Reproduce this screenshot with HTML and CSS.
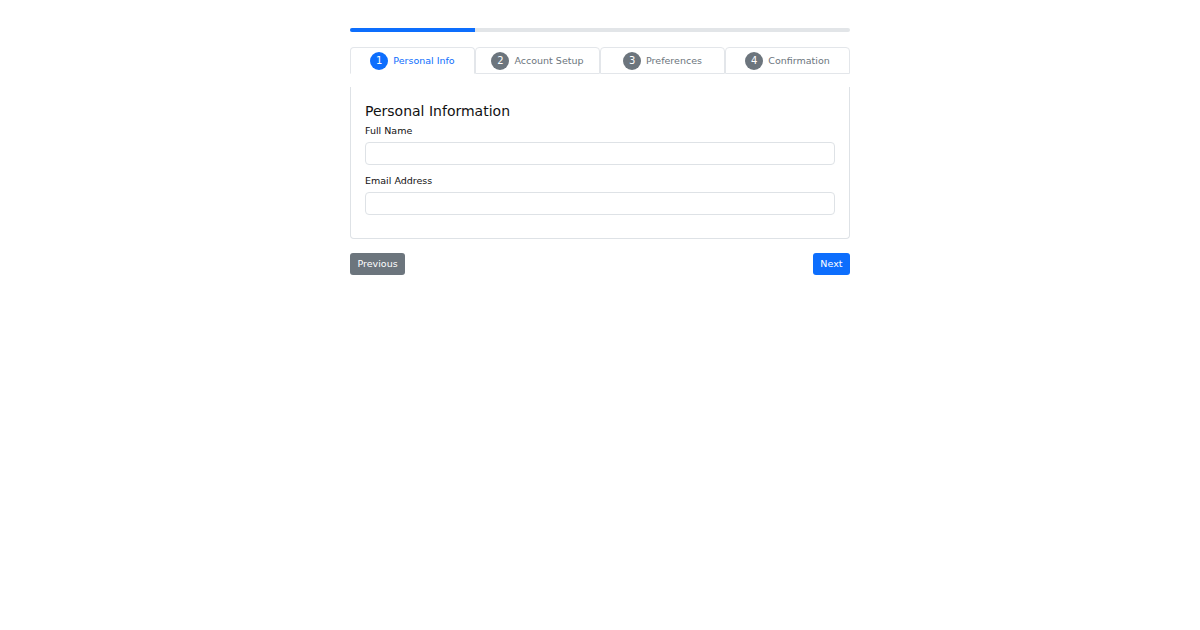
FILE: index.html
```html
<!DOCTYPE html>
<html lang="en">
<head>
<meta charset="utf-8">
<title>Wizard</title>
<link rel="stylesheet" href="styles.css">
</head>
<body>
<div class="wizard">
  <div class="progress"><div class="progress-fill" style="width:25%"></div></div>
  <div class="tabs">
    <div class="tab active"><span class="num">1</span><span class="label">Personal Info</span></div>
    <div class="tab"><span class="num">2</span><span class="label">Account Setup</span></div>
    <div class="tab"><span class="num">3</span><span class="label">Preferences</span></div>
    <div class="tab"><span class="num">4</span><span class="label">Confirmation</span></div>
  </div>
  <div class="card">
    <h2 class="title">Personal Information</h2>
    <div class="field">
      <label class="field-label">Full Name</label>
      <input class="input" type="text">
    </div>
    <div class="field">
      <label class="field-label">Email Address</label>
      <input class="input" type="email">
    </div>
  </div>
  <div class="actions">
    <button class="btn btn-secondary">Previous</button>
    <button class="btn btn-primary">Next</button>
  </div>
</div>
</body>
</html>
```
FILE: styles.css
```css
* { box-sizing: border-box; }
body {
  margin: 0;
  background: #fff;
  font-family: "DejaVu Sans", sans-serif;
  color: #212529;
}
.wizard {
  width: 500px;
  margin: 0 auto;
  padding-top: 28px;
}
.progress {
  height: 4px;
  background: #e2e5e8;
  border-radius: 2px;
  overflow: hidden;
}
.progress-fill {
  height: 100%;
  background: #0d6efd;
}
.tabs {
  display: flex;
  margin-top: 15px;
}
.tab {
  flex: 1;
  height: 27px;
  display: flex;
  align-items: center;
  justify-content: center;
  gap: 5px;
  border: 1px solid #e3e6ea;
  border-radius: 4px 4px 0 0;
  font-size: 9.5px;
  color: #6c757d;
}
.tab.active {
  border-bottom-color: #fff;
  color: #0d6efd;
}
.num {
  width: 18px;
  height: 18px;
  border-radius: 50%;
  background: #6c757d;
  color: #fff;
  display: flex;
  align-items: center;
  justify-content: center;
  font-size: 10px;
}
.tab.active .num { background: #0d6efd; }
.card {
  margin-top: 13px;
  border: 1px solid #dee2e6;
  border-top: none;
  border-radius: 0 0 4px 4px;
  padding: 16px 14px 13px;
}
.title {
  margin: 0;
  font-size: 14px;
  font-weight: normal;
  line-height: 16px;
  color: #111;
}
.field { margin-bottom: 10px; }
.field-label {
  display: block;
  margin-top: 6px;
  margin-bottom: 5px;
  font-size: 9.5px;
  line-height: 12px;
  color: #111;
}
.input {
  display: block;
  width: 100%;
  height: 23px;
  border: 1px solid #dee2e6;
  border-radius: 4px;
  background: #fff;
  font-family: inherit;
}
.actions {
  display: flex;
  justify-content: space-between;
  margin-top: 14px;
}
.btn {
  height: 22px;
  padding: 0 7.5px 1px;
  border: none;
  border-radius: 3px;
  color: #fff;
  font-family: "DejaVu Sans", sans-serif;
  font-size: 9.5px;
}
.btn-secondary { background: #6c757d; }
.btn-primary { background: #0d6efd; }
```
